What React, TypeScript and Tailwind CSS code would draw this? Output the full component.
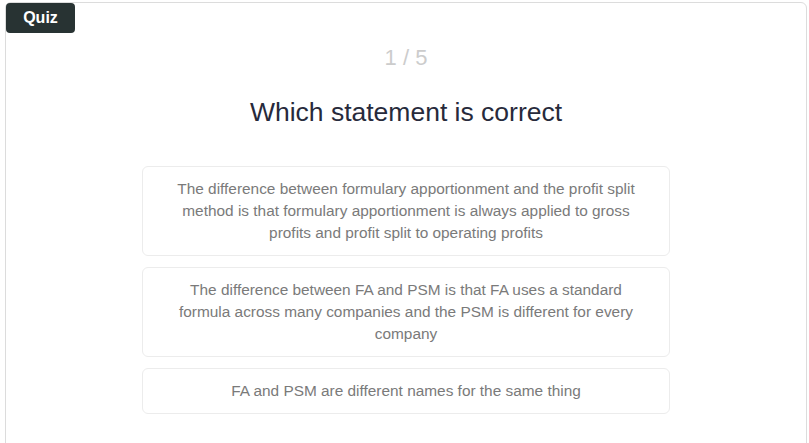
import React from "react";

const options = [
  "The difference between formulary apportionment and the profit split method is that formulary apportionment is always applied to gross profits and profit split to operating profits",
  "The difference between FA and PSM is that FA uses a standard formula across many companies and the PSM is different for every company",
  "FA and PSM are different names for the same thing",
];

export default function App() {
  return (
    <div
      className="min-h-screen bg-white pl-[5px] pr-[2px] pt-[2px]"
      style={{ fontFamily: '"Liberation Sans", Arial, sans-serif' }}
    >
      <div className="relative h-[460px] rounded-[6px] border border-[#dcdcdc] bg-white">
        <div className="absolute left-0 top-0 flex h-[30px] w-[69px] items-center justify-center rounded-[4px] bg-[#283333] text-[16px] font-bold text-white">
          Quiz
        </div>
        <div className="flex flex-col items-center pt-[41px]">
          <div className="text-[22px] leading-[28px] text-[#cccccc]">1 / 5</div>
          <div className="mt-[24px] text-[26.5px] leading-[32px] text-[#272a3b]">
            Which statement is correct
          </div>
          <div className="mt-[38px] flex w-[528px] flex-col gap-[11px]">
            {options.map((o, i) => (
              <div
                key={i}
                className="rounded-[6px] border border-[#ececec] bg-white px-[30px] py-[11px] text-center text-[15.4px] leading-[22px] text-[#7a7a7a]"
              >
                {o}
              </div>
            ))}
          </div>
        </div>
      </div>
    </div>
  );
}
